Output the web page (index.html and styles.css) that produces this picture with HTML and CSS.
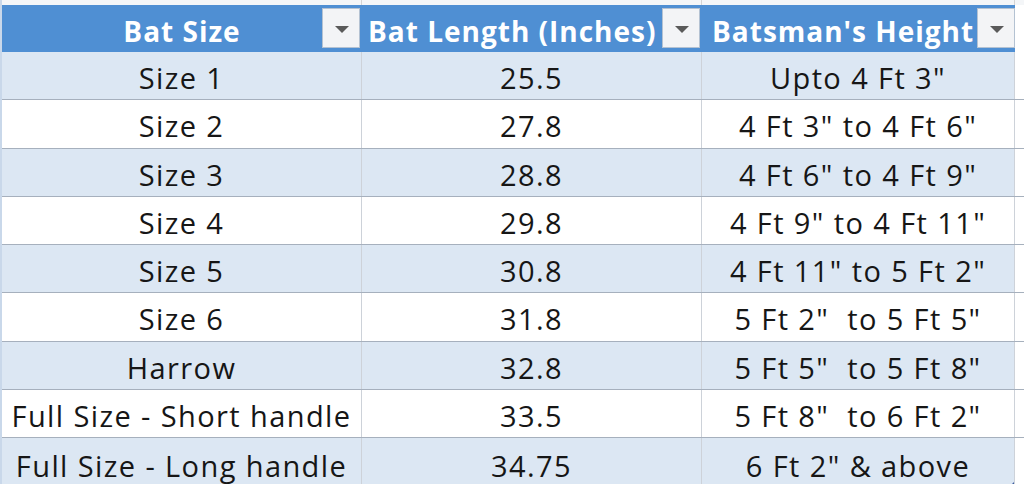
FILE: index.html
```html
<!DOCTYPE html>
<html>
<head>
<meta charset="utf-8">
<link rel="stylesheet" href="styles.css">
</head>
<body>
<div class="sheet">
  <div class="top-strip">
    <div class="ts c1"></div><div class="ts c2"></div><div class="ts c3"></div><div class="ts c4"></div>
  </div>
  <div class="row head">
    <div class="cell h h1"><span class="ht">Bat Size</span><span class="filter"></span></div>
    <div class="cell h h2"><span class="ht">Bat Length (Inches)</span><span class="filter"></span></div>
    <div class="cell h h3"><span class="ht">Batsman's Height</span><span class="filter"></span></div>
    <div class="cell extra"></div>
  </div>
  <div class="row band"><div class="cell">Size 1</div><div class="cell">25.5</div><div class="cell">Upto 4 Ft 3"</div><div class="cell extra"></div></div>
  <div class="row"><div class="cell">Size 2</div><div class="cell">27.8</div><div class="cell">4 Ft 3" to 4 Ft 6"</div><div class="cell extra"></div></div>
  <div class="row band"><div class="cell">Size 3</div><div class="cell">28.8</div><div class="cell">4 Ft 6" to 4 Ft 9"</div><div class="cell extra"></div></div>
  <div class="row"><div class="cell">Size 4</div><div class="cell">29.8</div><div class="cell">4 Ft 9" to 4 Ft 11"</div><div class="cell extra"></div></div>
  <div class="row band"><div class="cell">Size 5</div><div class="cell">30.8</div><div class="cell">4 Ft 11" to 5 Ft 2"</div><div class="cell extra"></div></div>
  <div class="row"><div class="cell">Size 6</div><div class="cell">31.8</div><div class="cell">5 Ft 2"  to 5 Ft 5"</div><div class="cell extra"></div></div>
  <div class="row band"><div class="cell">Harrow</div><div class="cell">32.8</div><div class="cell">5 Ft 5"  to 5 Ft 8"</div><div class="cell extra"></div></div>
  <div class="row"><div class="cell">Full Size - Short handle</div><div class="cell">33.5</div><div class="cell">5 Ft 8"  to 6 Ft 2"</div><div class="cell extra"></div></div>
  <div class="row band last"><div class="cell">Full Size - Long handle</div><div class="cell">34.75</div><div class="cell">6 Ft 2" &amp; above<span class="handle"></span></div><div class="cell extra"></div></div>
</div>
</body>
</html>
```
FILE: styles.css
```css
html, body {
  margin: 0;
  padding: 0;
  background: #ffffff;
}
body {
  width: 1024px;
  height: 484px;
  overflow: hidden;
  font-family: "Open Sans", "Lato", "Liberation Sans", sans-serif;
  color: #161616;
}
.sheet {
  display: flex;
  flex-direction: column;
  border-left: 2px solid #c9d8ea;
  width: 1022px;
}
.top-strip {
  display: grid;
  grid-template-columns: 360px 340px 313px 9px;
  height: 5px;
  background: #f4f6f8;
}
.ts { border-right: 1px solid #d4d4d4; }
.ts.c4 { border-right: none; }
.row {
  display: grid;
  grid-template-columns: 360px 340px 313px 9px;
  height: 48.25px;
  box-sizing: border-box;
  border-bottom: 1px solid #a6b0bd;
  background: #ffffff;
  flex: none;
}
.row.band { background: #dce7f3; }
.row.head {
  height: 47px;
  border-bottom: none;
  background: #ffffff;
}
.row.last { border-bottom: none; height: 50px; }
.cell {
  position: relative;
  display: flex;
  align-items: flex-start;
  justify-content: center;
  font-size: 29px;
  letter-spacing: 1.4px;
  line-height: 36px;
  white-space: pre;
  border-right: 1px solid #cdd2d9;
  padding-top: 8px;
  box-sizing: border-box;
  overflow: hidden;
}
.last .cell { padding-top: 10px; }
.cell.extra { border-right: none; background: #ffffff; }
.cell.h {
  background: #4f8fd3;
  color: #ffffff;
  font-weight: 700;
  border-right: none;
  padding-top: 8px;
  overflow: visible;
}
.cell.h2 { justify-content: flex-start; padding-left: 6px; }
.cell.h3 { justify-content: flex-start; padding-left: 10px; }
.ht { font-size: 28px; letter-spacing: 1px; }
.filter {
  position: absolute;
  right: 2px;
  top: 3px;
  width: 38px;
  height: 40px;
  box-sizing: border-box;
  background: #f3f4f6;
  border: 1px solid #b4c2d2;
}
.h3 .filter { right: 0; }
.filter::after {
  content: "";
  position: absolute;
  left: 12px;
  top: 17px;
  border-left: 7px solid transparent;
  border-right: 7px solid transparent;
  border-top: 7px solid #5a5a5a;
}
.handle {
  position: absolute;
  right: 0;
  bottom: 0;
  width: 6px;
  height: 6px;
  background: #3f5f9f;
  clip-path: polygon(100% 0, 100% 100%, 0 100%);
}
```
